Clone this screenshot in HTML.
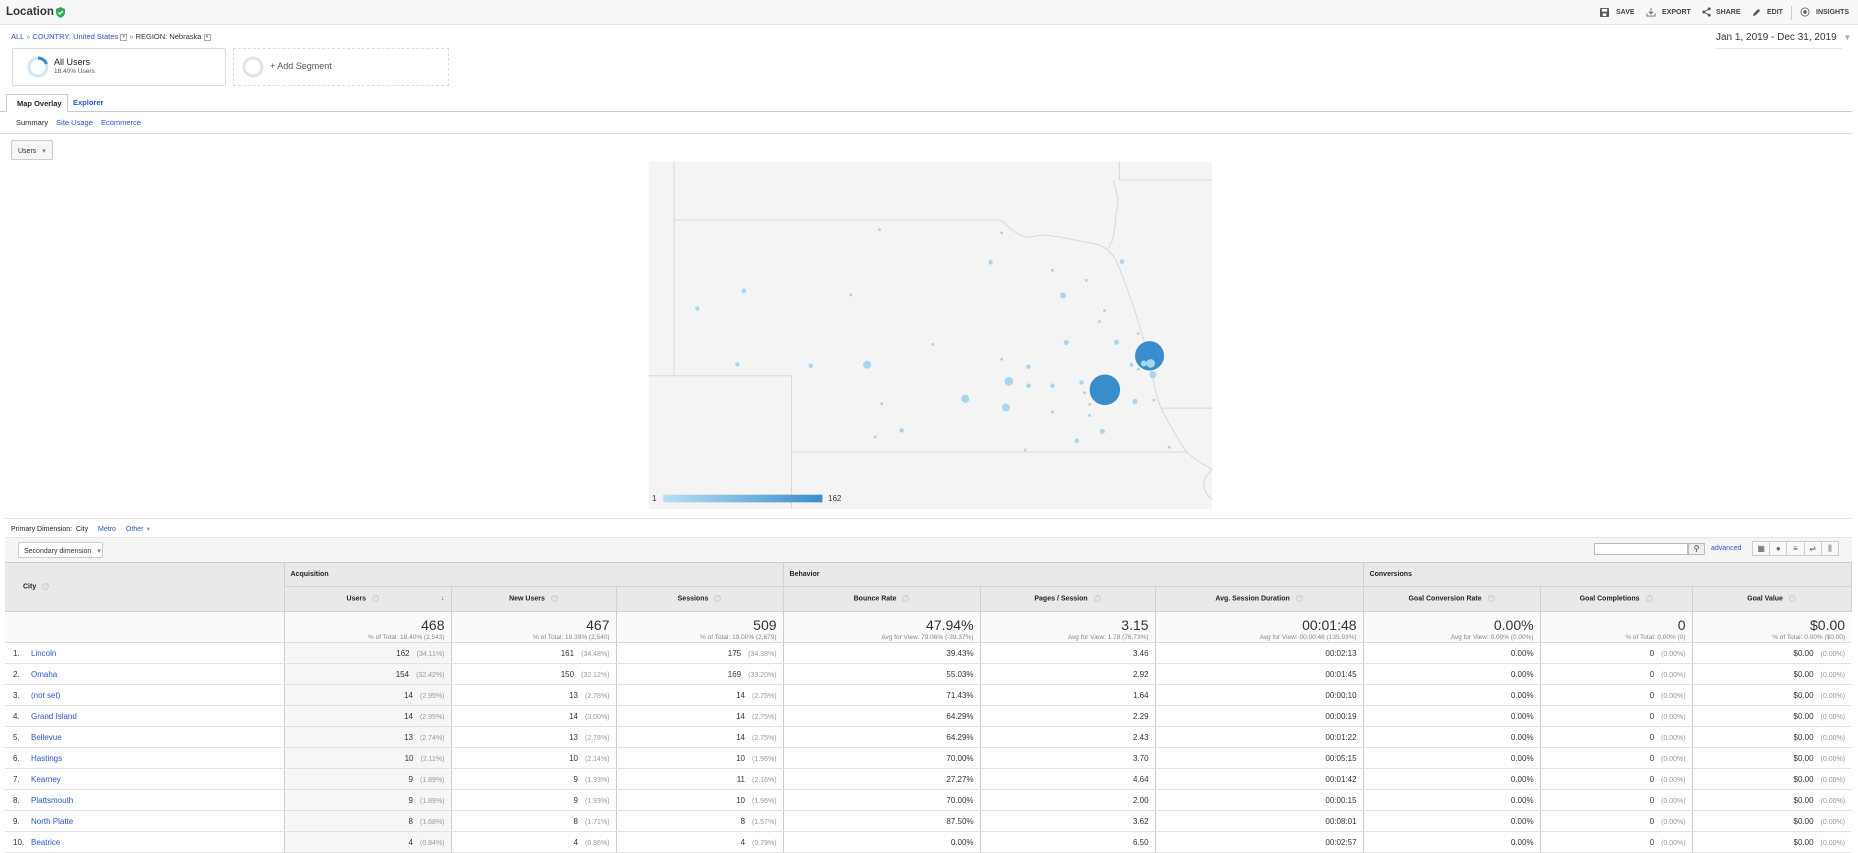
<!DOCTYPE html>
<html><head><meta charset="utf-8">
<style>
*{box-sizing:border-box;margin:0;padding:0}
body{width:1858px;height:849px;overflow:hidden;background:#fff;font-family:"Liberation Sans",Arial,sans-serif;color:#222;position:relative}
.abs{position:absolute;white-space:nowrap}
a{color:#2a56c6;text-decoration:none}
#hdr{left:0;top:0;width:1858px;height:25px;background:#f7f8f9;border-bottom:1px solid #e3e3e3}
.tb{font-size:7px;font-weight:bold;color:#444;top:9px}
table{border-collapse:collapse;table-layout:fixed;font-size:8px}
td,th{overflow:hidden;white-space:nowrap}
.gh th{background:#e9e9e9;height:24px;text-align:left;font-size:7px;padding-left:6px;border:1px solid #d2d2d2;border-top:0}
.sh th{background:#e9e9e9;height:25px;text-align:center;font-size:7px;border:1px solid #d2d2d2}
.q{display:inline-block;width:7px;height:7px;border:1px solid #ccc;border-radius:50%;vertical-align:middle;margin-left:6px;font-size:5px;color:#ccc;line-height:5px;text-align:center}
.tot td{height:31px;text-align:right;padding-right:6px;border-left:1px solid #ccc;border-bottom:1px solid #ddd;vertical-align:top;padding-top:6px;background:#fafafa}
.tot td b{display:block;font-weight:normal;font-size:14px;color:#333;line-height:14px}
.tot td i{display:block;font-style:normal;font-size:6.5px;color:#888;margin-top:2px}
.r td{height:21px;border-bottom:1px solid #e2e2e2;border-left:1px solid #ccc;text-align:right;padding-right:6px;color:#333}
.r td:first-child{text-align:left;padding-left:8px;border-left:0}
.r td:first-child span{display:inline-block;width:18px;color:#333}
.r td s{text-decoration:none;color:#999;font-size:7px;margin-left:7px}
.r td.u{background:#f6f6f6}
.r td.c{color:#2a56c6}
</style></head><body>
<div id="hdr" class="abs"></div>
<div class="abs" style="left:6px;top:6px;font-size:11.5px;font-weight:bold;color:#333">Location</div>
<svg class="abs" style="left:56px;top:7px" width="9" height="11" viewBox="0 0 10 12"><path d="M5 0L10 2V6C10 9 7.5 11 5 12C2.5 11 0 9 0 6V2Z" fill="#34a853"/><path d="M2.5 6L4.3 7.8L7.6 4.3" stroke="#fff" stroke-width="1.4" fill="none"/></svg>
<svg class="abs" style="left:1600px;top:8px" width="9" height="9" viewBox="0 0 10 10"><rect x="0" y="0" width="10" height="10" rx="1" fill="#555"/><rect x="2" y="1" width="6" height="3" fill="#fff"/><rect x="3" y="6" width="4" height="3" fill="#fff"/></svg>
<div class="abs tb" style="left:1616px">SAVE</div>
<svg class="abs" style="left:1646px;top:7px" width="10" height="10" viewBox="0 0 11 11"><path d="M5.5 1V7M3 5L5.5 7.5L8 5M1 7V10H10V7" stroke="#666" fill="none"/></svg>
<div class="abs tb" style="left:1662px">EXPORT</div>
<svg class="abs" style="left:1702px;top:7px" width="9" height="10" viewBox="0 0 10 11"><circle cx="8" cy="2" r="1.6" fill="#555"/><circle cx="2" cy="5.5" r="1.6" fill="#555"/><circle cx="8" cy="9" r="1.6" fill="#555"/><path d="M8 2L2 5.5L8 9" stroke="#555" fill="none"/></svg>
<div class="abs tb" style="left:1716px">SHARE</div>
<svg class="abs" style="left:1752px;top:8px" width="9" height="9" viewBox="0 0 10 10"><path d="M1 9L2 6L7 1L9 3L4 8Z" fill="#555"/></svg>
<div class="abs tb" style="left:1767px">EDIT</div>
<div class="abs" style="left:1791px;top:6px;width:1px;height:14px;background:#ccc"></div>
<svg class="abs" style="left:1800px;top:7px" width="10" height="10" viewBox="0 0 11 11"><circle cx="5.5" cy="5.5" r="4.5" stroke="#666" fill="none"/><circle cx="5.5" cy="5.5" r="2" fill="#666"/></svg>
<div class="abs tb" style="left:1816px">INSIGHTS</div>

<div class="abs" style="left:11px;top:32px;font-size:7.5px;color:#2a56c6">ALL <span style="color:#888">»</span> COUNTRY: United States <span style="display:inline-block;width:7px;height:7px;border:1px solid #aaa;vertical-align:middle;font-size:5px;line-height:5px;color:#777;text-align:center">▾</span> <span style="color:#888">»</span> <span style="color:#333">REGION: Nebraska</span> <span style="display:inline-block;width:7px;height:7px;border:1px solid #aaa;vertical-align:middle;font-size:5px;line-height:5px;color:#777;text-align:center">▾</span></div>
<div class="abs" style="left:1716px;top:32px;font-size:10px;color:#333">Jan 1, 2019 - Dec 31, 2019 <span style="color:#aaa;font-size:8px;margin-left:4px">▼</span></div>
<div class="abs" style="left:1716px;top:48px;width:126px;height:1px;background:#e5e5e5"></div>

<div class="abs" style="left:12px;top:48px;width:214px;height:38px;border:1px solid #ddd;border-radius:2px"></div>
<svg class="abs" style="left:27px;top:56px" width="22" height="22" viewBox="0 0 22 22"><circle cx="11" cy="11" r="9" stroke="#cfe6f5" stroke-width="3" fill="none"/><path d="M11 2A9 9 0 0 1 19.5 8" stroke="#3a8dcc" stroke-width="3" fill="none"/></svg>
<div class="abs" style="left:54px;top:57px;font-size:9px;color:#222">All Users</div>
<div class="abs" style="left:54px;top:68px;font-size:6.5px;color:#555">18.40% Users</div>
<div class="abs" style="left:233px;top:48px;width:216px;height:38px;border:1px dashed #ddd"></div>
<svg class="abs" style="left:242px;top:56px" width="22" height="22" viewBox="0 0 22 22"><circle cx="11" cy="11" r="9" stroke="#e3e3e3" stroke-width="3" fill="none"/></svg>
<div class="abs" style="left:270px;top:61px;font-size:9px;color:#555">+ Add Segment</div>

<div class="abs" style="left:0;top:111px;width:1852px;height:1px;background:#ccc"></div>
<div class="abs" style="left:6px;top:94px;width:62px;height:18px;border:1px solid #ccc;border-bottom:1px solid #fff;background:#fff;font-size:7.5px;font-weight:bold;color:#222;padding:4px 0 0 10px">Map Overlay</div>
<div class="abs" style="left:73px;top:98px;font-size:7.5px;font-weight:bold;color:#2a56c6">Explorer</div>
<div class="abs" style="left:16px;top:118px;font-size:7.5px;color:#222">Summary <a style="margin-left:6px">Site Usage</a> <a style="margin-left:6px">Ecommerce</a></div>
<div class="abs" style="left:0;top:133px;width:1852px;height:1px;background:#ddd"></div>
<div class="abs" style="left:11px;top:140px;width:42px;height:20px;border:1px solid #ccc;border-radius:2px;background:#f6f6f6;font-size:7px;color:#333;padding:6px 0 0 6px">Users <span style="color:#777;margin-left:4px">▾</span></div>

<svg class="abs" style="left:645px;top:160px" width="570" height="355" viewBox="0 0 1568 1066" preserveAspectRatio="none">
<rect x="10" y="5" width="1550" height="1043" fill="#f4f4f4"/>
<g stroke="#d8d8d8" stroke-width="3" fill="none">
<path d="M80 5V648M80 180H978M10 648H403V1048M403 877H1490M1305 5V60H1560M1420 745H1560"/>
<path d="M978 180C1000 200 1030 235 1060 232C1100 215 1170 240 1230 250C1260 255 1275 270 1290 290C1310 330 1330 400 1350 460C1360 500 1370 530 1380 570C1395 620 1400 700 1420 745C1440 790 1460 830 1490 877C1510 900 1540 915 1560 930"/>
<path d="M1275 265C1300 220 1290 170 1300 140C1305 110 1290 80 1290 60"/>
<path d="M1560 930C1530 960 1530 990 1560 1020"/>
</g>
<g fill="#a8d6ef">
<ellipse cx="1391" cy="611" rx="12" ry="13"/><ellipse cx="1397" cy="645" rx="10" ry="11"/><ellipse cx="1001" cy="665" rx="12" ry="13"/><ellipse cx="881" cy="717" rx="11" ry="12"/><ellipse cx="993" cy="743" rx="11" ry="12"/><ellipse cx="611" cy="615" rx="11" ry="12"/><ellipse cx="1150" cy="407" rx="8" ry="9"/><ellipse cx="1159" cy="548" rx="7" ry="8"/><ellipse cx="1297" cy="547" rx="7" ry="8"/><ellipse cx="1258" cy="815" rx="7" ry="8"/><ellipse cx="1348" cy="725" rx="7" ry="8"/><ellipse cx="706" cy="812" rx="6" ry="7"/><ellipse cx="951" cy="307" rx="6" ry="7"/><ellipse cx="1312" cy="305" rx="6" ry="7"/><ellipse cx="254" cy="614" rx="6" ry="7"/><ellipse cx="144" cy="446" rx="6" ry="7"/><ellipse cx="272" cy="393" rx="6" ry="7"/><ellipse cx="456" cy="618" rx="6" ry="7"/><ellipse cx="1055" cy="621" rx="6" ry="7"/><ellipse cx="1055" cy="678" rx="6" ry="7"/><ellipse cx="1121" cy="678" rx="6" ry="7"/><ellipse cx="1201" cy="668" rx="6" ry="7"/><ellipse cx="1188" cy="843" rx="6" ry="7"/><ellipse cx="1338" cy="615" rx="5" ry="6"/>
<ellipse cx="645" cy="209" rx="4" ry="4.5"/><ellipse cx="981" cy="219" rx="4" ry="4.5"/><ellipse cx="1121" cy="331" rx="4" ry="4.5"/><ellipse cx="1214" cy="361" rx="4" ry="4.5"/><ellipse cx="566" cy="405" rx="4" ry="4.5"/><ellipse cx="1264" cy="452" rx="4" ry="4.5"/><ellipse cx="1250" cy="485" rx="4" ry="4.5"/><ellipse cx="1357" cy="521" rx="4" ry="4.5"/><ellipse cx="792" cy="554" rx="4" ry="4.5"/><ellipse cx="981" cy="598" rx="4" ry="4.5"/><ellipse cx="1209" cy="699" rx="4" ry="4.5"/><ellipse cx="1223" cy="734" rx="4" ry="4.5"/><ellipse cx="1121" cy="757" rx="4" ry="4.5"/><ellipse cx="1223" cy="767" rx="4" ry="4.5"/><ellipse cx="651" cy="732" rx="4" ry="4.5"/><ellipse cx="633" cy="831" rx="4" ry="4.5"/><ellipse cx="1046" cy="871" rx="4" ry="4.5"/><ellipse cx="1442" cy="862" rx="4" ry="4.5"/><ellipse cx="1400" cy="721" rx="4" ry="4.5"/><ellipse cx="1357" cy="628" rx="4" ry="4.5"/>
</g>
<ellipse cx="1388" cy="588" rx="40" ry="44" fill="#3a8dcc"/>
<ellipse cx="1391" cy="611" rx="12" ry="13" fill="#a8d6ef"/><ellipse cx="1372" cy="611" rx="8" ry="9" fill="#a8d6ef"/>
<ellipse cx="1265" cy="690" rx="42" ry="46" fill="#3a8dcc"/>
<defs><linearGradient id="g" x1="0" x2="1"><stop offset="0" stop-color="#b7e0f5"/><stop offset="1" stop-color="#3a8dcc"/></linearGradient></defs>
<rect x="50" y="1005" width="438" height="23" fill="url(#g)"/>
</svg>
<div class="abs" style="left:652px;top:494px;font-size:8px;color:#333">1</div>
<div class="abs" style="left:828px;top:494px;font-size:8px;color:#333">162</div>

<div class="abs" style="left:5px;top:518px;width:1847px;height:1px;background:#e5e5e5"></div>
<div class="abs" style="left:11px;top:526px;font-size:7px;color:#222">Primary Dimension: <b style="font-weight:normal;color:#222;margin-left:2px">City</b> <a style="margin-left:8px">Metro</a> <a style="margin-left:8px">Other</a> <span style="color:#999;font-size:6px">▼</span></div>
<div class="abs" style="left:5px;top:537px;width:1847px;height:25px;background:#f5f5f5;border-top:1px solid #e5e5e5"></div>
<div class="abs" style="left:18px;top:542px;width:85px;height:16px;border:1px solid #ccc;border-radius:2px;background:#fff;font-size:7px;color:#333;padding:4px 0 0 5px">Secondary dimension <span style="color:#777;margin-left:4px">▾</span></div>
<div class="abs" style="left:1594px;top:543px;width:94px;height:12px;border:1px solid #bbb;background:#fff"></div>
<div class="abs" style="left:1688px;top:543px;width:17px;height:12px;border:1px solid #bbb;background:#f0f0f0;font-size:8px;text-align:center;line-height:10px;color:#444">⚲</div>
<div class="abs" style="left:1711px;top:545px;font-size:7px;color:#2a56c6">advanced</div>
<div class="abs" style="left:1752px;top:541px;width:87px;height:15px;border:1px solid #ccc;background:#f8f8f8;display:flex">
<span style="flex:1;border-right:1px solid #ccc;font-size:8px;text-align:center;color:#555;line-height:13px">▦</span><span style="flex:1;border-right:1px solid #ccc;font-size:8px;text-align:center;color:#666;line-height:13px">●</span><span style="flex:1;border-right:1px solid #ccc;font-size:8px;text-align:center;color:#555;line-height:13px">≡</span><span style="flex:1;border-right:1px solid #ccc;font-size:8px;text-align:center;color:#555;line-height:13px">⇌</span><span style="flex:1;font-size:8px;text-align:center;color:#555;line-height:13px">⫼</span></div>

<table class="abs" style="left:5px;top:562px;width:1846px;border-top:1px solid #ccc">
<colgroup><col style="width:279px"><col style="width:167px"><col style="width:165px"><col style="width:167px"><col style="width:197px"><col style="width:175px"><col style="width:208px"><col style="width:177px"><col style="width:152px"><col style="width:159px"></colgroup>
<tr class="gh"><th rowspan="2" style="border-left:0;padding-left:18px;vertical-align:middle">City<span class="q">?</span></th><th colspan="3">Acquisition</th><th colspan="3">Behavior</th><th colspan="3">Conversions</th></tr>
<tr class="sh"><th>Users<span class="q">?</span><span style="float:right;margin-right:6px;color:#666">↓</span></th><th>New Users<span class="q">?</span></th><th>Sessions<span class="q">?</span></th><th>Bounce Rate<span class="q">?</span></th><th>Pages / Session<span class="q">?</span></th><th>Avg. Session Duration<span class="q">?</span></th><th>Goal Conversion Rate<span class="q">?</span></th><th>Goal Completions<span class="q">?</span></th><th>Goal Value<span class="q">?</span></th></tr>
<tr class="tot"><td style="border-left:0"></td><td><b>468</b><i>% of Total: 18.40% (2,543)</i></td><td><b>467</b><i>% of Total: 18.39% (2,540)</i></td><td><b>509</b><i>% of Total: 19.00% (2,679)</i></td><td><b>47.94%</b><i>Avg for View: 79.06% (-39.37%)</i></td><td><b>3.15</b><i>Avg for View: 1.78 (76.73%)</i></td><td><b>00:01:48</b><i>Avg for View: 00:00:46 (135.93%)</i></td><td><b>0.00%</b><i>Avg for View: 0.00% (0.00%)</i></td><td><b>0</b><i>% of Total: 0.00% (0)</i></td><td><b>$0.00</b><i>% of Total: 0.00% ($0.00)</i></td></tr>
<tr class="r"><td class="c"><span>1.</span>Lincoln</td><td class="u">162<s>(34.11%)</s></td><td>161<s>(34.48%)</s></td><td>175<s>(34.38%)</s></td><td>39.43%</td><td>3.46</td><td>00:02:13</td><td>0.00%</td><td>0<s>(0.00%)</s></td><td>$0.00<s>(0.00%)</s></td></tr>
<tr class="r"><td class="c"><span>2.</span>Omaha</td><td class="u">154<s>(32.42%)</s></td><td>150<s>(32.12%)</s></td><td>169<s>(33.20%)</s></td><td>55.03%</td><td>2.92</td><td>00:01:45</td><td>0.00%</td><td>0<s>(0.00%)</s></td><td>$0.00<s>(0.00%)</s></td></tr>
<tr class="r"><td class="c"><span>3.</span>(not set)</td><td class="u">14<s>(2.95%)</s></td><td>13<s>(2.78%)</s></td><td>14<s>(2.75%)</s></td><td>71.43%</td><td>1.64</td><td>00:00:10</td><td>0.00%</td><td>0<s>(0.00%)</s></td><td>$0.00<s>(0.00%)</s></td></tr>
<tr class="r"><td class="c"><span>4.</span>Grand Island</td><td class="u">14<s>(2.95%)</s></td><td>14<s>(3.00%)</s></td><td>14<s>(2.75%)</s></td><td>64.29%</td><td>2.29</td><td>00:00:19</td><td>0.00%</td><td>0<s>(0.00%)</s></td><td>$0.00<s>(0.00%)</s></td></tr>
<tr class="r"><td class="c"><span>5.</span>Bellevue</td><td class="u">13<s>(2.74%)</s></td><td>13<s>(2.78%)</s></td><td>14<s>(2.75%)</s></td><td>64.29%</td><td>2.43</td><td>00:01:22</td><td>0.00%</td><td>0<s>(0.00%)</s></td><td>$0.00<s>(0.00%)</s></td></tr>
<tr class="r"><td class="c"><span>6.</span>Hastings</td><td class="u">10<s>(2.11%)</s></td><td>10<s>(2.14%)</s></td><td>10<s>(1.96%)</s></td><td>70.00%</td><td>3.70</td><td>00:05:15</td><td>0.00%</td><td>0<s>(0.00%)</s></td><td>$0.00<s>(0.00%)</s></td></tr>
<tr class="r"><td class="c"><span>7.</span>Kearney</td><td class="u">9<s>(1.89%)</s></td><td>9<s>(1.93%)</s></td><td>11<s>(2.16%)</s></td><td>27.27%</td><td>4.64</td><td>00:01:42</td><td>0.00%</td><td>0<s>(0.00%)</s></td><td>$0.00<s>(0.00%)</s></td></tr>
<tr class="r"><td class="c"><span>8.</span>Plattsmouth</td><td class="u">9<s>(1.89%)</s></td><td>9<s>(1.93%)</s></td><td>10<s>(1.96%)</s></td><td>70.00%</td><td>2.00</td><td>00:00:15</td><td>0.00%</td><td>0<s>(0.00%)</s></td><td>$0.00<s>(0.00%)</s></td></tr>
<tr class="r"><td class="c"><span>9.</span>North Platte</td><td class="u">8<s>(1.68%)</s></td><td>8<s>(1.71%)</s></td><td>8<s>(1.57%)</s></td><td>87.50%</td><td>3.62</td><td>00:08:01</td><td>0.00%</td><td>0<s>(0.00%)</s></td><td>$0.00<s>(0.00%)</s></td></tr>
<tr class="r"><td class="c"><span>10.</span>Beatrice</td><td class="u">4<s>(0.84%)</s></td><td>4<s>(0.86%)</s></td><td>4<s>(0.79%)</s></td><td>0.00%</td><td>6.50</td><td>00:02:57</td><td>0.00%</td><td>0<s>(0.00%)</s></td><td>$0.00<s>(0.00%)</s></td></tr>
</table>
</body></html>
